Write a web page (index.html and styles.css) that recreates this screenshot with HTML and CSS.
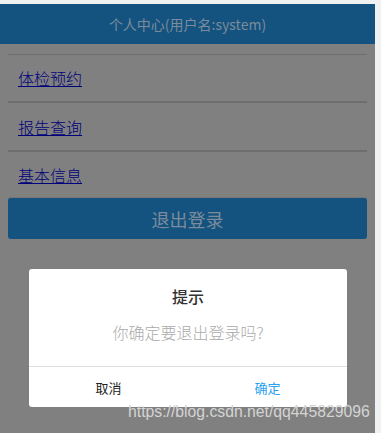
FILE: index.html
```html
<!DOCTYPE html>
<html lang="zh-CN">
<head>
<meta charset="utf-8">
<link rel="stylesheet" href="styles.css">
</head>
<body>
<div class="app">
  <header class="topbar">个人中心(用户名:system)</header>
  <nav class="menu">
    <div class="item"><a href="#">体检预约</a></div>
    <div class="item"><a href="#">报告查询</a></div>
    <div class="item"><a href="#">基本信息</a></div>
  </nav>
  <div class="logout">退出登录</div>
  <div class="dialog">
    <div class="dlg-title">提示</div>
    <div class="dlg-msg">你确定要退出登录吗?</div>
    <div class="dlg-btns">
      <span class="btn cancel">取消</span>
      <span class="btn ok">确定</span>
    </div>
  </div>
  <div class="watermark">https://blog.csdn.net/qq445829096</div>
</div>
</body>
</html>
```
FILE: styles.css
```css
html, body {
  margin: 0;
  padding: 0;
  background: #f0f1f3;
  height: 433px;
  overflow: hidden;
}
body {
  font-family: "Noto Sans CJK SC", "Liberation Sans", sans-serif;
}
.app {
  position: relative;
  width: 375px;
  height: 429px;
  margin-top: 4px;
  background: #808080;
}
.topbar {
  height: 40px;
  background: #14537f;
  color: #7b8b9b;
  font-size: 14px;
  display: flex;
  align-items: center;
  justify-content: center;
}
.menu {
  padding: 10px 8px 0;
}
.item {
  height: 47px;
  border-top: 1px solid #6e6e6e;
  display: flex;
  align-items: center;
  padding-left: 10px;
  box-sizing: border-box;
}
.item:nth-child(2) {
  height: 49px;
  border-top-width: 2px;
}
.item:nth-child(3) {
  border-top-width: 2px;
}
.item a {
  color: #00007a;
  font-size: 16px;
  font-weight: 300;
  text-decoration: underline;
}
.logout {
  margin: 0 8px;
  height: 41px;
  border-top: 1px solid #767676;
  background: #14537f;
  border-radius: 3px;
  color: #7b8b9b;
  font-size: 18px;
  display: flex;
  align-items: center;
  justify-content: center;
}
.dialog {
  position: absolute;
  left: 29px;
  top: 265px;
  width: 318px;
  height: 138px;
  background: #fff;
  border-radius: 3px;
  display: flex;
  flex-direction: column;
}
.dlg-title {
  margin-top: 16px;
  text-align: center;
  font-size: 16px;
  font-weight: 500;
  color: #333;
  line-height: 22px;
}
.dlg-msg {
  margin-top: 14px;
  text-align: center;
  font-size: 16px;
  font-weight: 300;
  color: #aaa;
  line-height: 22px;
}
.dlg-btns {
  margin-top: auto;
  height: 40px;
  border-top: 1px solid #ddd;
  display: flex;
}
.btn {
  flex: 1;
  display: flex;
  align-items: center;
  justify-content: center;
  font-size: 13px;
}
.cancel { color: #222; }
.ok { color: #2a9ff0; }
.watermark {
  position: absolute;
  left: 128px;
  top: 399px;
  font-family: "Liberation Sans", Arial, sans-serif;
  font-size: 15.75px;
  color: #d4d4d4;
}
```
